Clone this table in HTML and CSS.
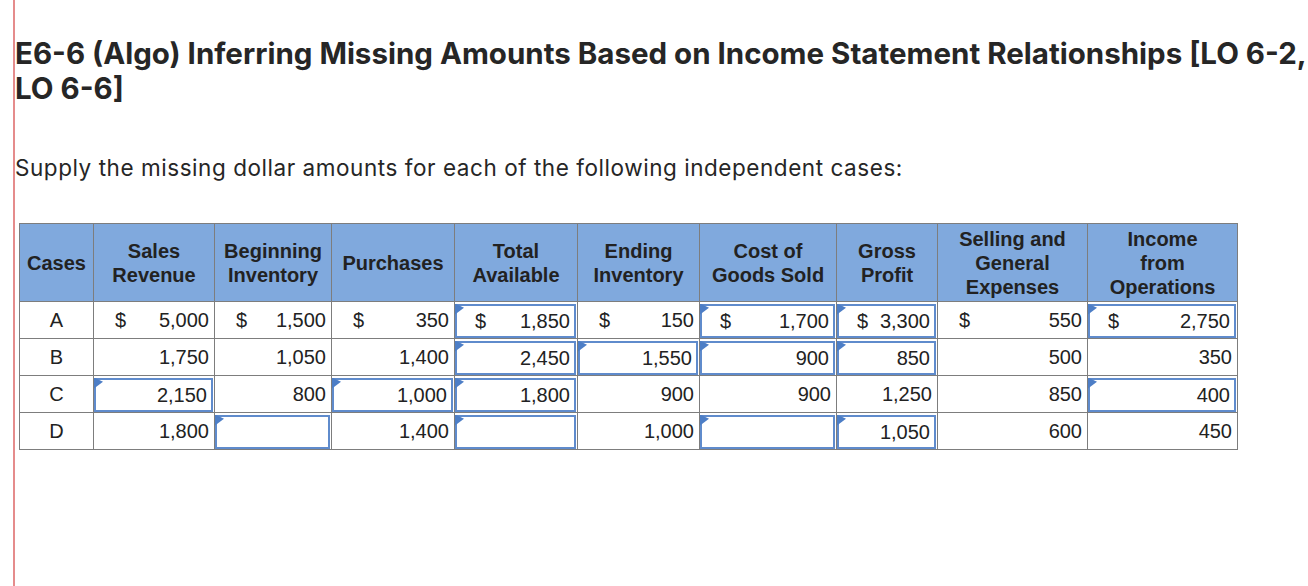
FILE: index.html
```html
<!DOCTYPE html>
<html lang="en">
<head>
<meta charset="utf-8">
<title>E6-6 (Algo)</title>
<link rel="stylesheet" href="styles.css">
</head>
<body>
<div class="page">
  <h1 class="title">E6-6 (Algo) Inferring Missing Amounts Based on Income Statement Relationships [LO 6-2, LO 6-6]</h1>
  <p class="intro">Supply the missing dollar amounts for each of the following independent cases:</p>
  <table class="cases">
    <colgroup>
      <col class="c-case"><col class="c-sales"><col class="c-beg"><col class="c-pur"><col class="c-tot">
      <col class="c-end"><col class="c-cogs"><col class="c-gp"><col class="c-sga"><col class="c-inc">
    </colgroup>
    <thead>
      <tr>
        <th>Cases</th>
        <th>Sales<br>Revenue</th>
        <th>Beginning<br>Inventory</th>
        <th>Purchases</th>
        <th>Total<br>Available</th>
        <th>Ending<br>Inventory</th>
        <th>Cost of<br>Goods Sold</th>
        <th>Gross<br>Profit</th>
        <th>Selling and<br>General<br>Expenses</th>
        <th>Income<br>from<br>Operations</th>
      </tr>
    </thead>
    <tbody>
      <tr>
        <td class="case">A</td>
        <td><div class="val"><span class="usd">$</span><span>5,000</span></div></td>
        <td><div class="val"><span class="usd">$</span><span>1,500</span></div></td>
        <td><div class="val"><span class="usd">$</span><span>350</span></div></td>
        <td class="in"><div class="box val"><i class="flag"></i><span class="usd">$</span><span>1,850</span></div></td>
        <td><div class="val"><span class="usd">$</span><span>150</span></div></td>
        <td class="in"><div class="box val"><i class="flag"></i><span class="usd">$</span><span>1,700</span></div></td>
        <td class="in"><div class="box val"><i class="flag"></i><span class="usd">$</span><span>3,300</span></div></td>
        <td><div class="val"><span class="usd">$</span><span>550</span></div></td>
        <td class="in"><div class="box val"><i class="flag"></i><span class="usd">$</span><span>2,750</span></div></td>
      </tr>
      <tr>
        <td class="case">B</td>
        <td><div class="val"><span>1,750</span></div></td>
        <td><div class="val"><span>1,050</span></div></td>
        <td><div class="val"><span>1,400</span></div></td>
        <td class="in"><div class="box val"><i class="flag"></i><span>2,450</span></div></td>
        <td class="in"><div class="box val"><i class="flag"></i><span>1,550</span></div></td>
        <td class="in"><div class="box val"><i class="flag"></i><span>900</span></div></td>
        <td class="in"><div class="box val"><i class="flag"></i><span>850</span></div></td>
        <td><div class="val"><span>500</span></div></td>
        <td><div class="val"><span>350</span></div></td>
      </tr>
      <tr>
        <td class="case">C</td>
        <td class="in"><div class="box val"><i class="flag"></i><span>2,150</span></div></td>
        <td><div class="val"><span>800</span></div></td>
        <td class="in"><div class="box val"><i class="flag"></i><span>1,000</span></div></td>
        <td class="in"><div class="box val"><i class="flag"></i><span>1,800</span></div></td>
        <td><div class="val"><span>900</span></div></td>
        <td><div class="val"><span>900</span></div></td>
        <td><div class="val"><span>1,250</span></div></td>
        <td><div class="val"><span>850</span></div></td>
        <td class="in"><div class="box val"><i class="flag"></i><span>400</span></div></td>
      </tr>
      <tr>
        <td class="case">D</td>
        <td><div class="val"><span>1,800</span></div></td>
        <td class="in"><div class="box val"><i class="flag"></i></div></td>
        <td><div class="val"><span>1,400</span></div></td>
        <td class="in"><div class="box val"><i class="flag"></i></div></td>
        <td><div class="val"><span>1,000</span></div></td>
        <td class="in"><div class="box val"><i class="flag"></i></div></td>
        <td class="in"><div class="box val"><i class="flag"></i><span>1,050</span></div></td>
        <td><div class="val"><span>600</span></div></td>
        <td><div class="val"><span>450</span></div></td>
      </tr>
    </tbody>
  </table>
</div>
</body>
</html>
```

FILE: styles.css
```css
html, body {
  margin: 0;
  padding: 0;
  background: #ffffff;
}

.page {
  margin-left: 13px;
  border-left: 2px solid #e58c8c;
  min-height: 586px;
  box-sizing: border-box;
  padding-top: 36px;
  color: #262626;
}

.title {
  margin: 0;
  font-family: Inter, Lato, sans-serif;
  font-weight: 700;
  font-size: 29.5px;
  line-height: 35px;
  letter-spacing: 0;
  color: #262626;
}

.intro {
  margin: 48px 0 0 0;
  font-family: Inter, Lato, sans-serif;
  font-size: 22.5px;
  line-height: 28px;
  letter-spacing: 0.55px;
  color: #262626;
}

.cases {
  margin: 41px 0 0 4px;
  border-collapse: collapse;
  table-layout: fixed;
  width: 1218px;
  font-family: "Liberation Sans", Arial, sans-serif;
  font-size: 20px;
  color: #222222;
}

.c-case { width: 74px; }
.c-sales { width: 121px; }
.c-beg { width: 117px; }
.c-pur { width: 123px; }
.c-tot { width: 123px; }
.c-end { width: 122px; }
.c-cogs { width: 137px; }
.c-gp { width: 101px; }
.c-sga { width: 150px; }
.c-inc { width: 150px; }

.cases th {
  background: #80a9dd;
  border: 1px solid #7d7d7d;
  height: 77px;
  padding: 0;
  font-weight: 700;
  line-height: 24px;
  text-align: center;
  vertical-align: middle;
}

.cases td {
  border: 1px solid #7d7d7d;
  height: 35px;
  padding: 0;
  line-height: 20px;
  vertical-align: middle;
}

.cases td.case {
  text-align: center;
}

.val {
  display: flex;
  justify-content: flex-end;
  align-items: center;
  height: 35px;
  padding: 0 5px 0 21px;
  box-sizing: border-box;
}

.usd {
  margin-right: auto;
}

.cases td.in {
  padding: 1px 1px 0 1px;
}

.box {
  position: relative;
  height: 34px;
  border: 2px solid #5f8bcc;
  padding: 0 4px 0 18px;
  margin-left: -1px;
}

.flag {
  position: absolute;
  left: -2px;
  top: -2px;
  width: 9px;
  height: 11px;
  background: #4d7ec6;
  clip-path: polygon(0 0, 100% 38%, 0 100%);
}
```
